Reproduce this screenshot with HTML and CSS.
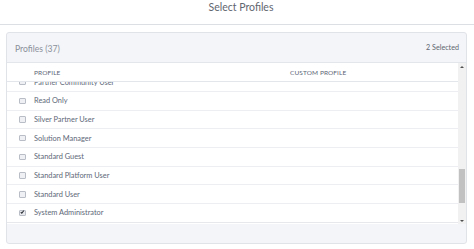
FILE: index.html
```html
<!DOCTYPE html>
<html>
<head>
<meta charset="utf-8">
<link rel="stylesheet" href="styles.css">
</head>
<body>
<div class="modal-head"><h1 class="title">Select Profiles</h1></div>
<div class="content">
  <div class="card">
    <div class="card-head">
      <span class="card-title">Profiles (37)</span>
      <span class="card-count">2 Selected</span>
    </div>
    <div class="table-wrap">
      <div class="table-col">
        <div class="thead">
          <span class="th th-profile">Profile</span>
          <span class="th">Custom Profile</span>
        </div>
        <div class="viewport">
          <div class="rows">
            <div class="row"><span class="cb"></span><span class="name">Partner Community User</span></div>
            <div class="row"><span class="cb"></span><span class="name">Read Only</span></div>
            <div class="row"><span class="cb"></span><span class="name">Silver Partner User</span></div>
            <div class="row"><span class="cb"></span><span class="name">Solution Manager</span></div>
            <div class="row"><span class="cb"></span><span class="name">Standard Guest</span></div>
            <div class="row"><span class="cb"></span><span class="name">Standard Platform User</span></div>
            <div class="row"><span class="cb"></span><span class="name">Standard User</span></div>
            <div class="row"><span class="cb checked"><svg viewBox="0 0 6 6" width="6" height="6"><path d="M1 3.2 L2.4 4.6 L5 1.2" fill="none" stroke="#2b2f36" stroke-width="1.4"/></svg></span><span class="name">System Administrator</span></div>
          </div>
        </div>
      </div>
      <div class="scrollbar">
        <span class="arrow up"></span>
        <div class="track"><div class="thumb"></div></div>
        <span class="arrow down"></span>
      </div>
    </div>
    <div class="card-foot"></div>
  </div>
</div>
</body>
</html>
```

FILE: styles.css
```css
html, body {
  margin: 0;
  padding: 0;
  background: #ffffff;
  font-family: Lato, "Open Sans", sans-serif;
}

.modal-head {
  height: 25px;
  border-bottom: 1px solid #dcdfe4;
  box-sizing: border-box;
  display: flex;
  justify-content: center;
  padding-left: 8px;
}

.title {
  margin: 0;
  padding-top: 1px;
  font-size: 10.5px;
  line-height: 12px;
  font-weight: 400;
  color: #5f6670;
}

.content {
  padding: 7px 7px 0 6px;
}

.card {
  border: 1px solid #e0e3e8;
  border-radius: 3px;
  background: #f4f5f8;
  display: flex;
  flex-direction: column;
}

.card-head {
  height: 29px;
  display: flex;
  align-items: center;
  justify-content: space-between;
  padding: 0 7px 0 8px;
}

.card-title {
  font-size: 8.6px;
  color: #8a909b;
  margin-top: 2px;
}

.card-count {
  font-size: 7.2px;
  color: #5f6670;
}

.table-wrap {
  display: flex;
  background: #ffffff;
  border-top: 1px solid #e3e6ea;
  height: 160.6px;
}

.table-col {
  flex: 1;
  display: flex;
  flex-direction: column;
  min-width: 0;
}

.thead {
  height: 19px;
  box-sizing: border-box;
  border-bottom: 1px solid #e3e6ea;
  display: flex;
  align-items: center;
  padding-left: 27px;
}

.th {
  font-size: 6.5px;
  text-transform: uppercase;
  color: #5b6576;
  letter-spacing: 0.1px;
}

.th-profile {
  width: 256px;
}

.viewport {
  flex: 1;
  overflow: hidden;
}

.rows {
  margin-top: -8.7px;
}

.row {
  height: 18.7px;
  box-sizing: border-box;
  border-bottom: 1px solid #eceef1;
  display: flex;
  align-items: center;
  padding-left: 12px;
}

.row:last-child {
  border-bottom-color: #e6e8ec;
}

.cb {
  width: 6.5px;
  height: 6.5px;
  box-sizing: border-box;
  border: 1px solid #b9bec6;
  border-radius: 1px;
  background: #eef0f3;
  margin-right: 8.5px;
  display: flex;
  align-items: center;
  justify-content: center;
}

.cb.checked {
  background: #e8eaee;
  border-color: #b9bec6;
}

.cb svg {
  display: block;
  margin-top: -1px;
}

.name {
  font-size: 7.4px;
  color: #5e6878;
  white-space: nowrap;
}

.scrollbar {
  width: 8px;
  background: #f1f1f1;
  display: flex;
  flex-direction: column;
  align-items: center;
}

.track {
  flex: 1;
  width: 100%;
}

.thumb {
  margin: 99px auto 0;
  width: 6px;
  height: 34px;
  background: #c1c1c1;
}

.arrow {
  width: 0;
  height: 0;
  border-left: 2px solid transparent;
  border-right: 2px solid transparent;
}

.arrow.up {
  border-bottom: 2px solid #505050;
  margin: 3px 0 2px;
}

.arrow.down {
  border-top: 2px solid #505050;
  margin: 2px 0 2px;
}

.card-foot {
  height: 19px;
}
```
